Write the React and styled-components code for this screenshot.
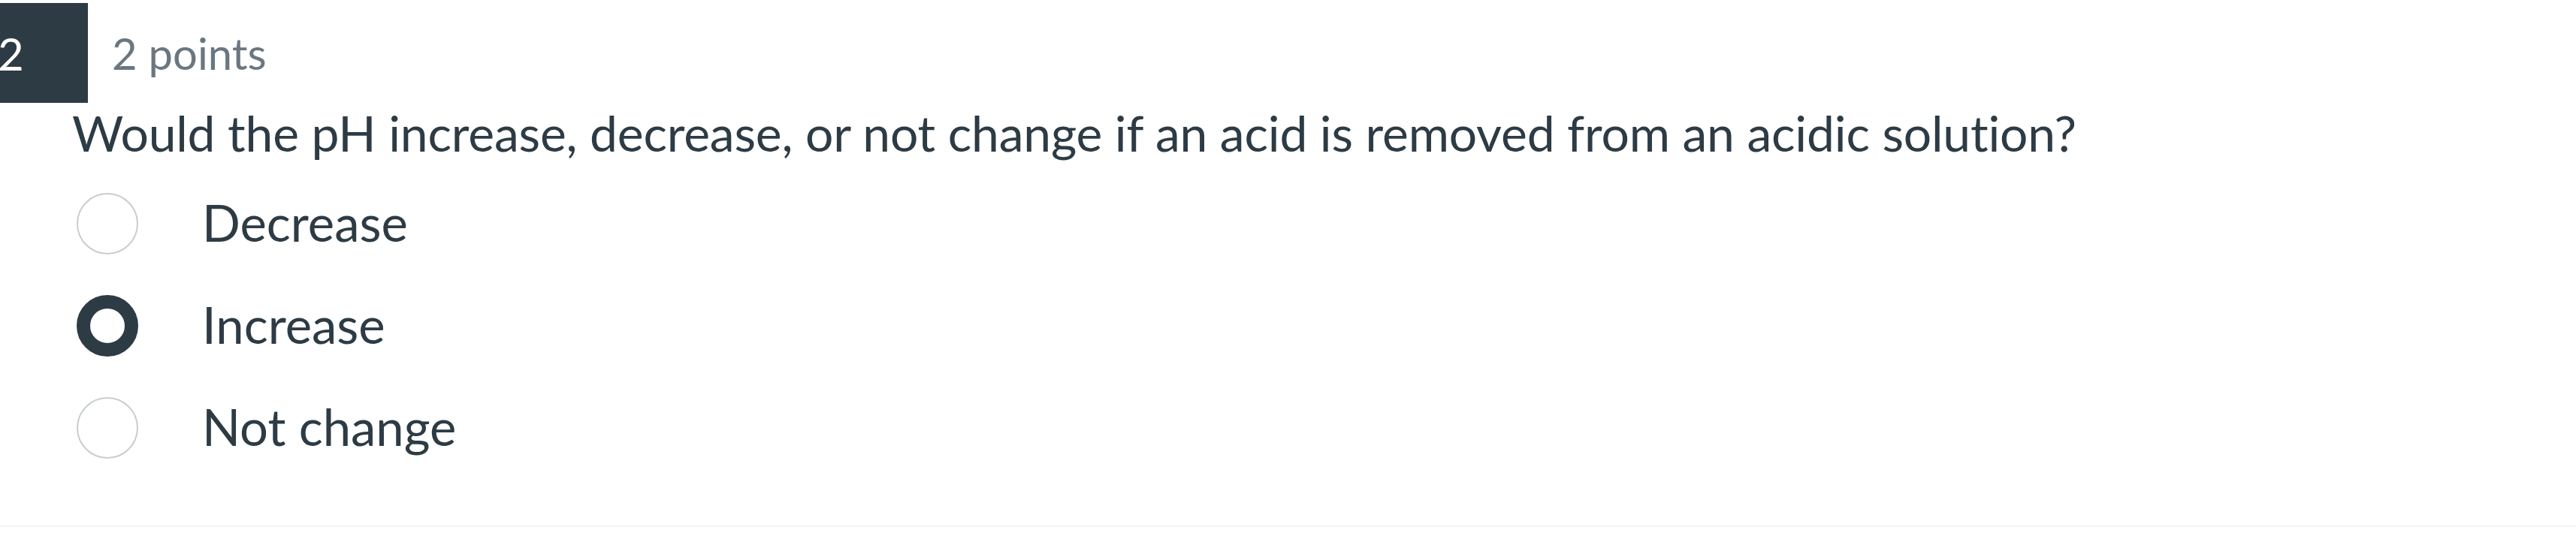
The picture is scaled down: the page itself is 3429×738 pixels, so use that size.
import React from 'react';
import styled, { createGlobalStyle } from 'styled-components';

const GlobalStyle = createGlobalStyle`
  body {
    margin: 0;
    background: #fff;
    font-family: Lato, "Noto Sans", sans-serif;
    color: #2d3b45;
  }
`;

const Question = styled.div`
  width: 100%;
  border-bottom: 2px solid #f2f3f4;
  padding-bottom: 62px;
`;

const Header = styled.div`
  display: flex;
  align-items: center;
  margin-top: 4px;
  height: 133px;
`;

const Badge = styled.div`
  width: 117px;
  height: 100%;
  background: #2d3b45;
  color: #fff;
  font-size: 60px;
  display: flex;
  align-items: center;
  text-indent: -3px;
`;

const Points = styled.span`
  margin-left: 32px;
  font-size: 58px;
  color: #6b7780;
`;

const Text = styled.p`
  margin: 0;
  padding-left: 96px;
  font-size: 66px;
  line-height: 80px;
  letter-spacing: -0.2px;
`;

const Answers = styled.div`
  margin-top: 13px;
  display: flex;
  flex-direction: column;
`;

const Answer = styled.label`
  display: flex;
  align-items: center;
  height: 136px;
`;

const Radio = styled.span`
  box-sizing: border-box;
  width: 82px;
  height: 82px;
  margin-left: 102px;
  border-radius: 50%;
  background: #fff;
  border: ${(p) => (p.checked ? '18px solid #2d3b45' : '2px solid #c7cdd1')};
`;

const Label = styled.span`
  margin-left: 85px;
  padding-bottom: 4px;
  font-size: 67px;
  line-height: 1;
`;

const answers = [
  { text: 'Decrease', checked: false },
  { text: 'Increase', checked: true },
  { text: 'Not change', checked: false },
];

const App = () => {
  return (
    <>
      <GlobalStyle />
      <Question>
        <Header>
          <Badge>2</Badge>
          <Points>2 points</Points>
        </Header>
        <Text>
          Would the pH increase, decrease, or not change if an acid is removed from an acidic solution?
        </Text>
        <Answers>
          {answers.map((a) => (
            <Answer key={a.text}>
              <Radio checked={a.checked} />
              <Label>{a.text}</Label>
            </Answer>
          ))}
        </Answers>
      </Question>
    </>
  );
};

export default App;
